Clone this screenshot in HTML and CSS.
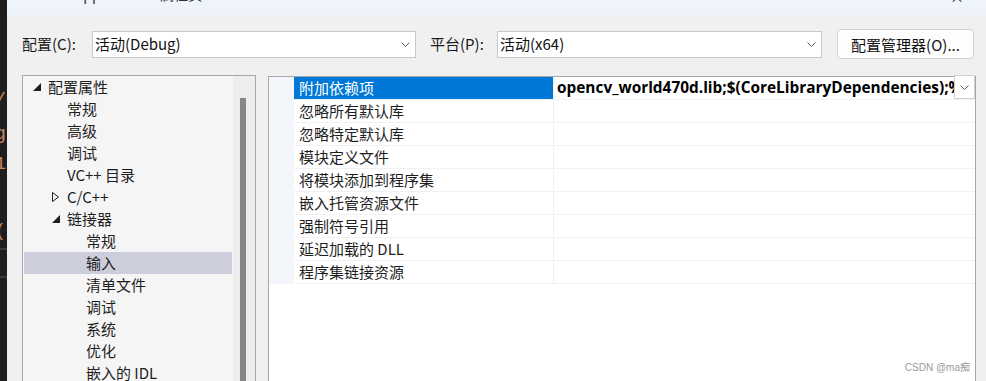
FILE: index.html
```html
<!DOCTYPE html>
<html lang="zh-CN">
<head>
<meta charset="utf-8">
<title>ConsoleApplication1 属性页</title>
<link rel="stylesheet" href="styles.css">
</head>
<body>
<div class="screen">
  <div class="editor-strip">
    <span class="frag frag-1">/</span>
    <span class="frag frag-2">g</span>
    <span class="frag frag-3">1</span>
    <span class="frag frag-4">(</span>
    <span class="code-rule rule-1"></span>
    <span class="code-rule rule-2"></span>
  </div>
  <div class="dialog">
    <div class="titlebar">
      <span class="title">ConsoleApplication1 属性页</span>
      <span class="tb-help">?</span>
      <span class="tb-close">×</span>
    </div>
    <div class="toolbar">
      <span class="lbl lbl-config">配置(C):</span>
      <div class="combo combo-config">
        <span class="combo-text">活动(Debug)</span>
        <svg class="chev" width="9" height="5" viewBox="0 0 9 5"><path d="M0.5 0.5L4.5 4.5L8.5 0.5" fill="none" stroke="#606060"/></svg>
      </div>
      <span class="lbl lbl-platform">平台(P):</span>
      <div class="combo combo-platform">
        <span class="combo-text">活动(x64)</span>
        <svg class="chev" width="9" height="5" viewBox="0 0 9 5"><path d="M0.5 0.5L4.5 4.5L8.5 0.5" fill="none" stroke="#606060"/></svg>
      </div>
      <button class="btn">配置管理器(O)...</button>
    </div>
    <div class="main">
      <div class="tree">
        <div class="tree-rows">
          <div class="trow l0"><span class="tog"><svg width="8" height="8" viewBox="0 0 8 8"><path d="M8 0V8H0Z" fill="#1e1e1e"/></svg></span><span>配置属性</span></div>
          <div class="trow l1"><span class="tog"></span><span>常规</span></div>
          <div class="trow l1"><span class="tog"></span><span>高级</span></div>
          <div class="trow l1"><span class="tog"></span><span>调试</span></div>
          <div class="trow l1"><span class="tog"></span><span>VC++ 目录</span></div>
          <div class="trow l1"><span class="tog"><svg width="7" height="10" viewBox="0 0 7 10"><path d="M0.5 0.5L6.5 5L0.5 9.5Z" fill="none" stroke="#1e1e1e"/></svg></span><span>C/C++</span></div>
          <div class="trow l1"><span class="tog"><svg width="8" height="8" viewBox="0 0 8 8"><path d="M8 0V8H0Z" fill="#1e1e1e"/></svg></span><span>链接器</span></div>
          <div class="trow l2"><span class="tog"></span><span>常规</span></div>
          <div class="trow l2 selected"><span class="tog"></span><span>输入</span></div>
          <div class="trow l2"><span class="tog"></span><span>清单文件</span></div>
          <div class="trow l2"><span class="tog"></span><span>调试</span></div>
          <div class="trow l2"><span class="tog"></span><span>系统</span></div>
          <div class="trow l2"><span class="tog"></span><span>优化</span></div>
          <div class="trow l2"><span class="tog"></span><span>嵌入的 IDL</span></div>
        </div>
        <div class="scrollbar"><div class="thumb"></div></div>
      </div>
      <div class="grid">
        <div class="prow">
          <div class="gutter"></div>
          <div class="pname active">附加依赖项</div>
          <div class="pval"><span class="val-text">opencv_world470d.lib;$(CoreLibraryDependencies);%(AdditionalDependencies)</span>
            <span class="dd-btn"><svg width="9" height="5" viewBox="0 0 9 5"><path d="M0.5 0.5L4.5 4.5L8.5 0.5" fill="none" stroke="#606060"/></svg></span>
          </div>
        </div>
        <div class="prow"><div class="gutter"></div><div class="pname">忽略所有默认库</div><div class="pval"></div></div>
        <div class="prow"><div class="gutter"></div><div class="pname">忽略特定默认库</div><div class="pval"></div></div>
        <div class="prow"><div class="gutter"></div><div class="pname">模块定义文件</div><div class="pval"></div></div>
        <div class="prow"><div class="gutter"></div><div class="pname">将模块添加到程序集</div><div class="pval"></div></div>
        <div class="prow"><div class="gutter"></div><div class="pname">嵌入托管资源文件</div><div class="pval"></div></div>
        <div class="prow"><div class="gutter"></div><div class="pname">强制符号引用</div><div class="pval"></div></div>
        <div class="prow"><div class="gutter"></div><div class="pname">延迟加载的 DLL</div><div class="pval"></div></div>
        <div class="prow"><div class="gutter"></div><div class="pname">程序集链接资源</div><div class="pval"></div></div>
      </div>
    </div>
  </div>
  <div class="watermark">CSDN @ma痴</div>
</div>
</body>
</html>
```
FILE: styles.css
```css
html, body {
  margin: 0;
  padding: 0;
}
body {
  width: 986px;
  height: 381px;
  overflow: hidden;
  background: #f0f0f0;
  font-family: "Noto Sans CJK SC", "Noto Sans", sans-serif;
  font-size: 15px;
  color: #1b1b1b;
}
.screen {
  position: relative;
  display: flex;
  height: 381px;
  overflow: hidden;
}

/* dark code editor strip behind the dialog */
.editor-strip {
  flex: none;
  width: 7px;
  background: #1e1e1e;
  overflow: hidden;
  display: flex;
  flex-direction: column;
  font-family: "Liberation Mono", monospace;
  font-size: 18px;
  color: #c88a5e;
  line-height: 18px;
}
.frag {
  display: block;
  margin-left: -5px;
  white-space: nowrap;
}
.frag-1 { margin-top: 91px; }
.frag-2 { margin-top: 16px; }
.frag-3 { margin-top: 12px; }
.frag-4 { margin-top: 49px; }
.code-rule {
  display: block;
  height: 2px;
  background: #3a3a3a;
}
.rule-1 { margin-top: 8px; }
.rule-2 { margin-top: 26px; }

.dialog {
  flex: 1;
  min-width: 0;
  display: flex;
  flex-direction: column;
}

/* title bar (mostly scrolled off the top) */
.titlebar {
  flex: none;
  height: 15px;
  background: #eef4f9;
  overflow: hidden;
  display: flex;
  align-items: flex-start;
  padding-left: 15px;
  font-size: 14px;
  line-height: 16px;
  color: #333;
}
.title {
  margin-top: -14px;
}
.tb-help {
  margin-left: auto;
  margin-top: -13px;
  margin-right: 46px;
  font-size: 13px;
}
.tb-close {
  margin-top: -12px;
  margin-right: 22px;
  font-size: 14px;
}

/* top row of combos */
.toolbar {
  flex: none;
  display: flex;
  align-items: center;
  height: 30px;
  padding: 14px 0 0 15px;
}
.lbl {
  flex: none;
  white-space: nowrap;
  line-height: 20px;
}
.lbl-config { width: 70px; }
.lbl-platform { width: 67px; margin-left: 14px; }
.combo {
  flex: none;
  box-sizing: border-box;
  height: 27px;
  border: 1px solid #c8c8c8;
  background: #fff;
  display: flex;
  align-items: center;
  justify-content: space-between;
  padding: 0 5px 0 2px;
}
.combo-config { width: 324px; }
.combo-platform { width: 325px; }
.combo-text {
  line-height: 20px;
  color: #111;
}
.chev { flex: none; }
.btn {
  flex: none;
  box-sizing: border-box;
  margin-left: 15px;
  width: 137px;
  height: 30px;
  padding: 0;
  border: 1px solid #d2d2d2;
  border-radius: 4px;
  background: #fdfdfd;
  font: inherit;
  color: #111;
}

/* main area */
.main {
  flex: 1;
  min-height: 0;
  display: flex;
  align-items: flex-start;
  margin-top: 16px;
  padding-left: 15px;
}
.tree {
  flex: none;
  box-sizing: border-box;
  width: 234px;
  height: 330px;
  border: 1px solid #a7a7a7;
  background: #f5f5f5;
  display: flex;
}
.tree-rows {
  width: 210px;
  flex: none;
}
.trow {
  display: flex;
  align-items: center;
  height: 22px;
  line-height: 22px;
  white-space: nowrap;
  margin: 0 1px;
  color: #1e1e1e;
}
.trow.l0 { padding-left: 9px; }
.trow.l1 { padding-left: 28px; }
.trow.l2 { padding-left: 47px; }
.trow.selected { background: #cccedb; }
.tog {
  flex: none;
  width: 15px;
  height: 22px;
  display: flex;
  align-items: center;
}
.scrollbar {
  flex: none;
  width: 22px;
  background: #ededed;
  padding: 22px 0 0 7px;
  box-sizing: border-box;
}
.thumb {
  width: 6px;
  height: 320px;
  background: #868686;
}

.grid {
  flex: none;
  box-sizing: border-box;
  width: 708px;
  height: 330px;
  margin-left: 12px;
  margin-top: 1px;
  border: 1px solid #a7a7a7;
  background: #fff;
}
.prow {
  display: flex;
  height: 23px;
}
.gutter {
  flex: none;
  width: 25px;
  background: #f3f6fb;
}
.pname {
  flex: none;
  box-sizing: border-box;
  width: 259px;
  height: 23px;
  padding-left: 5px;
  line-height: 22px;
  border-bottom: 1px solid #eff1f5;
  white-space: nowrap;
  color: #1e1e1e;
}
.pname.active {
  background: #0078d7;
  color: #fff;
}
.pval {
  position: relative;
  flex: 1;
  min-width: 0;
  box-sizing: border-box;
  height: 23px;
  border-left: 1px solid #eff1f5;
  border-bottom: 1px solid #eff1f5;
  padding-left: 3px;
  white-space: nowrap;
}
.val-text {
  display: block;
  overflow: hidden;
  width: 404px;
  font-family: "Open Sans", "Noto Sans", sans-serif;
  font-weight: 700;
  font-size: 15.4px;
  line-height: 21px;
  color: #000;
}
.dd-btn {
  position: absolute;
  right: 0;
  top: -2px;
  box-sizing: border-box;
  width: 21px;
  height: 24px;
  border: 1px solid #cfcfcf;
  background: #fff;
  display: flex;
  align-items: center;
  justify-content: center;
}

.watermark {
  position: absolute;
  right: 16px;
  bottom: 7px;
  font-family: "Liberation Sans", "Noto Sans CJK SC", sans-serif;
  font-size: 10px;
  line-height: 12px;
  color: #9a9a9a;
}
```
